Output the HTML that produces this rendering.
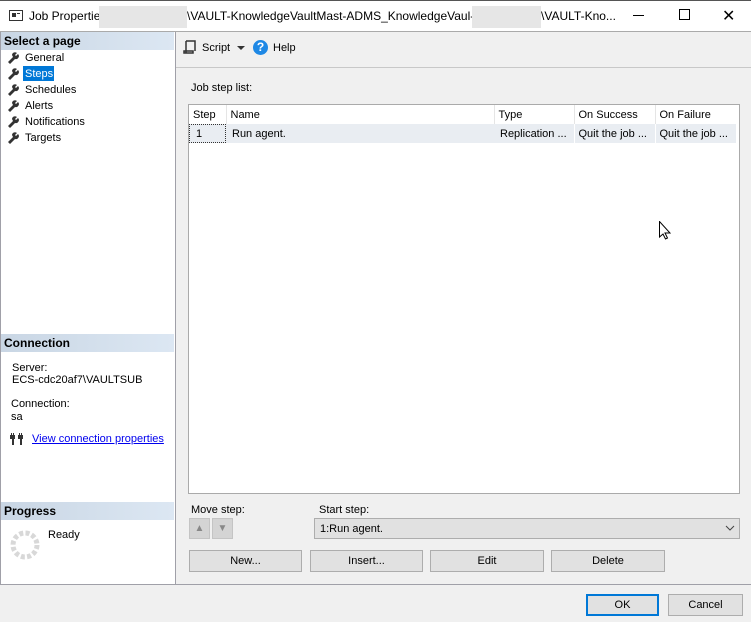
<!DOCTYPE html>
<html><head><meta charset="utf-8"><style>
*{margin:0;padding:0;box-sizing:border-box}
body{width:751px;height:622px;background:#f0f0f0;font-family:"Liberation Sans",sans-serif;font-size:11px;color:#000;position:relative;overflow:hidden}
.a{position:absolute}
.hdr{position:absolute;left:1px;width:173px;height:18px;background:linear-gradient(90deg,#c9d6e4,#dce7f3);font-weight:bold;font-size:12px;padding:2px 0 0 3px}
.btn{position:absolute;height:22px;background:#e1e1e1;border:1px solid #adadad;text-align:center;line-height:20px}
th,td{font-weight:normal;text-align:left;padding:0 4px;height:19px;white-space:nowrap;overflow:hidden}
</style></head><body>
<div class="a" style="left:0;top:0;width:751px;height:1px;background:#555"></div>
<div class="a" style="left:0;top:1px;width:751px;height:30px;background:#fff"></div>
<div class="a" style="left:9px;top:10px;width:14px;height:11px;border:1px solid #333"></div>
<div class="a" style="left:12px;top:13px;width:4px;height:4px;background:#333"></div>
<div class="a" style="left:17px;top:13px;width:3px;height:1px;background:#333"></div>
<div class="a" style="left:29px;top:9px;font-size:12px">Job Propertie</div>
<div class="a" style="left:99px;top:6px;width:88px;height:22px;background:#e6e6e6"></div>
<div class="a" style="left:187px;top:9px;font-size:12px">\VAULT-KnowledgeVaultMast-ADMS_KnowledgeVaul-E</div>
<div class="a" style="left:472px;top:6px;width:69px;height:22px;background:#e6e6e6"></div>
<div class="a" style="left:541px;top:9px;font-size:12px">\VAULT-Kno...</div>
<div class="a" style="left:633px;top:15px;width:11px;height:1px;background:#000"></div>
<div class="a" style="left:679px;top:9px;width:11px;height:11px;border:1px solid #000"></div>
<div class="a" style="left:722px;top:6px;font-size:16px">✕</div>
<div class="a" style="left:0;top:31px;width:751px;height:1px;background:#aaa"></div>

<div class="a" style="left:0;top:32px;width:176px;height:553px;background:#fff;border:1px solid #a0a0a8;border-top:none"></div>
<div class="hdr" style="top:32px">Select a page</div>
<svg class="a" style="left:7px;top:52px" width="12" height="96" viewBox="0 0 12 96">
<g fill="#333"><path id="wr" d="M1 10 L6 5 L5 3 A3 3 0 0 1 10 1 L8 3 L9 4 L11 2 A3 3 0 0 1 8 7 L3 12 Z"/>
<use href="#wr" y="16"/><use href="#wr" y="32"/><use href="#wr" y="48"/><use href="#wr" y="64"/><use href="#wr" y="80"/></g></svg>
<div class="a" style="left:25px;top:52px">General</div>
<div class="a" style="left:23px;top:66px;width:31px;height:15px;background:#0078d7"></div>
<div class="a" style="left:25px;top:68px;color:#fff">Steps</div>
<div class="a" style="left:25px;top:84px">Schedules</div>
<div class="a" style="left:25px;top:100px">Alerts</div>
<div class="a" style="left:25px;top:116px">Notifications</div>
<div class="a" style="left:25px;top:132px">Targets</div>

<div class="hdr" style="top:334px">Connection</div>
<div class="a" style="left:12px;top:362px">Server:</div>
<div class="a" style="left:12px;top:374px">ECS-cdc20af7\VAULTSUB</div>
<div class="a" style="left:11px;top:398px">Connection:</div>
<div class="a" style="left:11px;top:411px">sa</div>
<svg class="a" style="left:10px;top:433px" width="14" height="12" viewBox="0 0 14 12"><g fill="#333"><rect x="0" y="2" width="5" height="4"/><rect x="2" y="6" width="2" height="6"/><rect x="8" y="2" width="5" height="4"/><rect x="10" y="6" width="2" height="6"/><rect x="9" y="0" width="1" height="2"/><rect x="11" y="0" width="1" height="2"/><rect x="1" y="0" width="1" height="2"/><rect x="3" y="0" width="1" height="2"/></g></svg>
<div class="a" style="left:32px;top:433px;color:#0000ee;text-decoration:underline">View connection properties</div>

<div class="hdr" style="top:502px">Progress</div>
<svg class="a" style="left:9px;top:529px" width="32" height="32" viewBox="0 0 32 32"><circle cx="16" cy="16" r="12" fill="none" stroke="#d8d8d8" stroke-width="5" stroke-dasharray="4 2.3"/></svg>
<div class="a" style="left:48px;top:529px">Ready</div>

<svg class="a" style="left:183px;top:40px" width="13" height="15" viewBox="0 0 13 15"><path d="M3 1 H12 V11 M3 1 V13 H1 V11 H10 V13 H3" fill="none" stroke="#333" stroke-width="1.5"/></svg>
<div class="a" style="left:202px;top:42px">Script</div>
<div class="a" style="left:237px;top:46px;width:0;height:0;border-left:4px solid transparent;border-right:4px solid transparent;border-top:4px solid #333"></div>
<div class="a" style="left:253px;top:40px;width:15px;height:15px;border-radius:50%;background:#1e88e5;color:#fff;font-weight:bold;font-size:12px;text-align:center;line-height:15px">?</div>
<div class="a" style="left:273px;top:42px">Help</div>
<div class="a" style="left:176px;top:67px;width:575px;height:1px;background:#c8c8c8"></div>

<div class="a" style="left:191px;top:82px">Job step list:</div>
<div class="a" style="left:188px;top:104px;width:552px;height:390px;background:#fff;border:1px solid #aaa">
<table style="border-collapse:collapse;table-layout:fixed;width:547px;font-size:11px">
<colgroup><col style="width:37px"><col style="width:268px"><col style="width:80px"><col style="width:81px"><col style="width:81px"></colgroup>
<tr><th style="border-right:1px solid #e5e5e5">Step</th><th style="border-right:1px solid #e5e5e5">Name</th><th style="border-right:1px solid #e5e5e5">Type</th><th style="border-right:1px solid #e5e5e5">On Success</th><th>On Failure</th></tr>
<tr style="background:#e9edf2"><td style="outline:1px dotted #333;outline-offset:-1px;padding-left:7px">1</td><td style="padding-left:6px">Run agent.</td><td style="padding-left:6px">Replication ...</td><td style="border-left:1px solid #fff">Quit the job ...</td><td style="border-left:1px solid #fff">Quit the job ...</td></tr>
</table></div>
<svg class="a" style="left:659px;top:221px" width="12" height="20" viewBox="0 0 12 20"><path d="M0.5 0.5 V16 L4 13 L6.5 18 L8.5 17 L6 12 H11 Z" fill="#fff" stroke="#000"/></svg>

<div class="a" style="left:191px;top:504px">Move step:</div>
<div class="a" style="left:189px;top:518px;width:21px;height:21px;background:#d4d4d4;border:1px solid #c4c4c4;color:#888;text-align:center;line-height:19px;font-size:10px">▲</div>
<div class="a" style="left:212px;top:518px;width:21px;height:21px;background:#d4d4d4;border:1px solid #c4c4c4;color:#888;text-align:center;line-height:19px;font-size:10px">▼</div>
<div class="a" style="left:319px;top:504px">Start step:</div>
<div class="a" style="left:314px;top:518px;width:426px;height:21px;background:#e1e1e1;border:1px solid #adadad;padding:4px 0 0 5px">1:Run agent.</div>
<svg class="a" style="left:725px;top:525px" width="10" height="6" viewBox="0 0 10 6"><path d="M1 1 L5 5 L9 1" fill="none" stroke="#444"/></svg>

<div class="btn" style="left:189px;top:550px;width:113px">New...</div>
<div class="btn" style="left:310px;top:550px;width:113px">Insert...</div>
<div class="btn" style="left:430px;top:550px;width:114px">Edit</div>
<div class="btn" style="left:551px;top:550px;width:114px">Delete</div>

<div class="a" style="left:0;top:584px;width:751px;height:1px;background:#a0a0a8"></div>
<div class="btn" style="left:586px;top:594px;width:73px;height:22px;border:2px solid #0078d7;line-height:18px">OK</div>
<div class="btn" style="left:668px;top:594px;width:75px">Cancel</div>
</body></html>
